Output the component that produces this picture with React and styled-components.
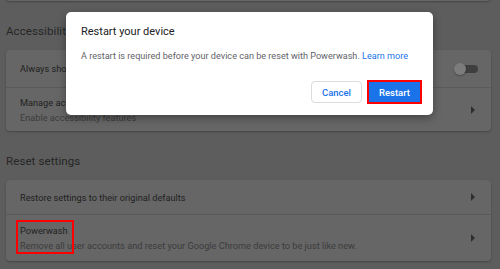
import styled, { createGlobalStyle } from 'styled-components'

const GlobalStyle = createGlobalStyle`
  html, body {
    margin: 0;
    padding: 0;
    background: #5d5d5d;
    font-family: Roboto, 'Liberation Sans', Arial, sans-serif;
  }
  * { box-sizing: border-box; }
`

const Page = styled.div`
  position: relative;
  width: 500px;
  height: 269px;
  overflow: hidden;
  padding: 0 9px 0 6px;
`

const Card = styled.div`
  background: #666666;
  border-radius: 4px;
  box-shadow: 0 1px 2px rgba(0, 0, 0, 0.25);
  margin-top: ${(p) => p.$top || 0}px;
  height: ${(p) => (p.$height ? `${p.$height}px` : 'auto')};
`

const Heading = styled.h2`
  margin: 0;
  height: 49px;
  display: flex;
  align-items: flex-end;
  padding-bottom: 12px;
  font-size: 11.5px;
  line-height: 14px;
  font-weight: 400;
  color: #262626;
  letter-spacing: 0.1px;
`

const Row = styled.div`
  position: relative;
  display: flex;
  align-items: center;
  justify-content: space-between;
  height: ${(p) => p.$height}px;
  padding: 0 16px 0 14px;
  border-top: ${(p) => (p.$divider ? '1px solid #5a5a5a' : 'none')};
`

const Labels = styled.div`
  display: flex;
  flex-direction: column;
  gap: 4px;
`

const Label = styled.span`
  font-size: 9.2px;
  color: #222222;
`

const Sub = styled.span`
  font-size: 9.2px;
  color: #3c3c3c;
`

const Arrow = styled.span`
  width: 0;
  height: 0;
  border-top: 4px solid transparent;
  border-bottom: 4px solid transparent;
  border-left: 4px solid #2e2e2e;
`

const Toggle = styled.span`
  position: relative;
  width: 20px;
  height: 8px;
  border-radius: 4px;
  background: #3f3f3f;
  margin-right: -3px;
  &::before {
    content: '';
    position: absolute;
    left: -4px;
    top: -2px;
    width: 12px;
    height: 12px;
    border-radius: 50%;
    background: #7c7c7c;
    box-shadow: 0 1px 2px rgba(0, 0, 0, 0.3);
  }
`

const RedBox = styled.span`
  position: absolute;
  left: 10px;
  top: 5px;
  width: 58px;
  height: 34px;
  border: 2px solid #ff0000;
  pointer-events: none;
`

const Dialog = styled.div`
  position: absolute;
  left: 66px;
  top: 12px;
  width: 367px;
  height: 103px;
  background: #ffffff;
  border-radius: 5px;
  box-shadow: 0 3px 8px rgba(0, 0, 0, 0.35);
  padding: 13px 11px 11px 15px;
  display: flex;
  flex-direction: column;
`

const Title = styled.h1`
  margin: 0;
  font-size: 11px;
  font-weight: 400;
  color: #202124;
  line-height: 14px;
`

const Body = styled.p`
  margin: 11px 0 0;
  font-size: 9.1px;
  color: #5f6368;
  line-height: 12px;
`

const Link = styled.a`
  color: #1a73e8;
  text-decoration: none;
`

const Actions = styled.div`
  margin-top: auto;
  display: flex;
  justify-content: flex-end;
  align-items: center;
  gap: 5px;
`

const Marker = styled.span`
  display: inline-flex;
  border: 2px solid #ff0000;
`

const Button = styled.button`
  font-family: inherit;
  font-size: 9.5px;
  font-weight: 500;
  height: ${(p) => (p.$primary ? 20 : 22)}px;
  width: 51px;
  border-radius: ${(p) => (p.$primary ? 0 : 4)}px;
  padding: 0;
  border: 1px solid ${(p) => (p.$primary ? '#1a73e8' : '#dadce0')};
  background: ${(p) => (p.$primary ? '#1a73e8' : '#ffffff')};
  color: ${(p) => (p.$primary ? '#ffffff' : '#1a73e8')};
`

export default function App() {
  return (
    <>
      <GlobalStyle />
      <Page>
        <Card $top={-20} $height={21} />
        <Heading>Accessibility</Heading>
        <Card>
          <Row $height={37}>
            <Labels>
              <Label>Always show accessibility options in the system menu</Label>
            </Labels>
            <Toggle />
          </Row>
          <Row $height={44} $divider>
            <Labels>
              <Label>Manage accessibility features</Label>
              <Sub>Enable accessibility features</Sub>
            </Labels>
            <Arrow />
          </Row>
        </Card>
        <Heading>Reset settings</Heading>
        <Card>
          <Row $height={34}>
            <Labels>
              <Label>Restore settings to their original defaults</Label>
            </Labels>
            <Arrow />
          </Row>
          <Row $height={47} $divider>
            <Labels>
              <Label>Powerwash</Label>
              <Sub>Remove all user accounts and reset your Google Chrome device to be just like new.</Sub>
            </Labels>
            <Arrow />
            <RedBox />
          </Row>
        </Card>
        <Dialog>
          <Title>Restart your device</Title>
          <Body>
            A restart is required before your device can be reset with Powerwash.{' '}
            <Link href="#">Learn more</Link>
          </Body>
          <Actions>
            <Button>Cancel</Button>
            <Marker>
              <Button $primary>Restart</Button>
            </Marker>
          </Actions>
        </Dialog>
      </Page>
    </>
  )
}
